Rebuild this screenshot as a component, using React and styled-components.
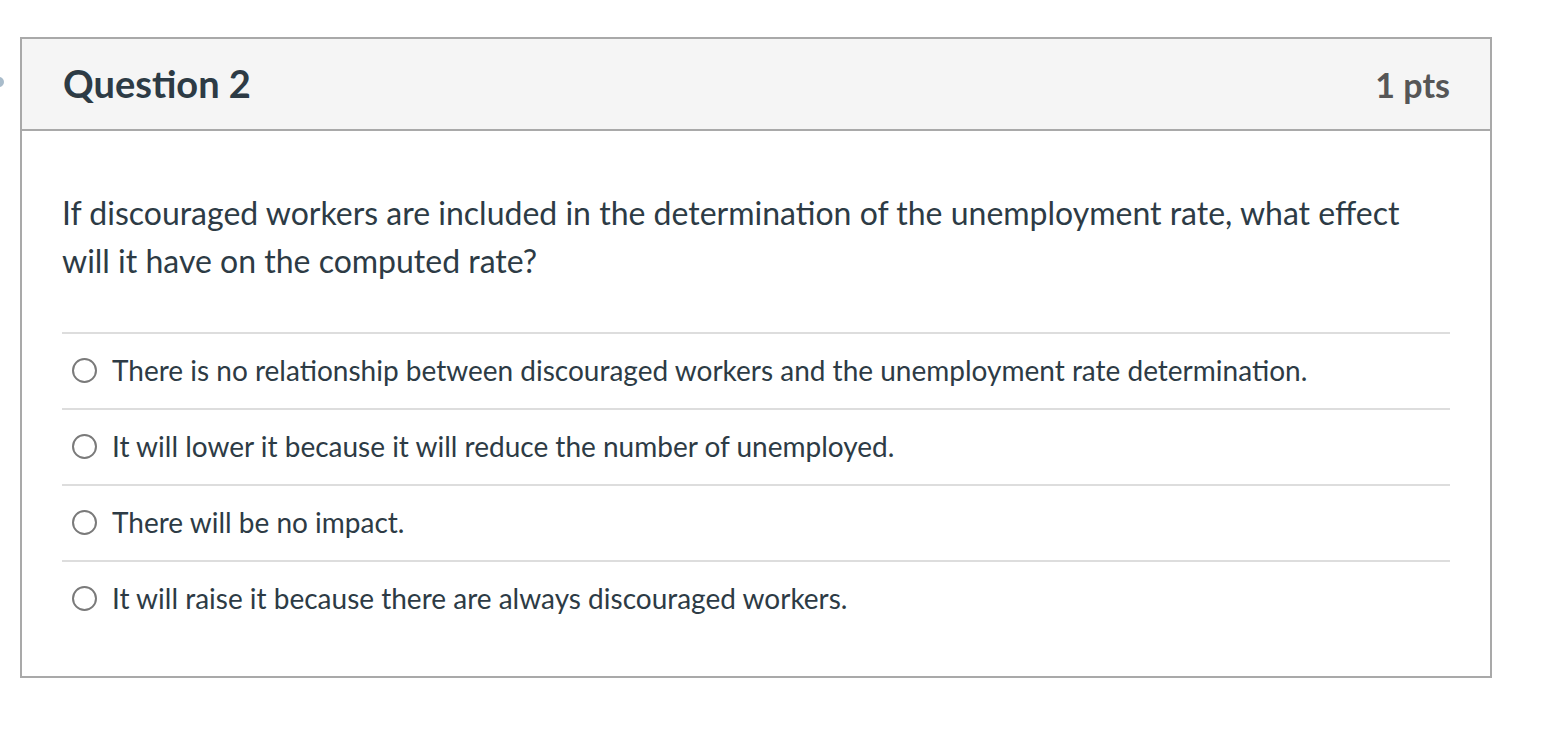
import styled, { createGlobalStyle } from "styled-components";

const GlobalStyle = createGlobalStyle`
  html, body {
    margin: 0;
    padding: 0;
    background: #ffffff;
  }
  body {
    font-family: Lato, "Noto Sans", "Liberation Sans", sans-serif;
    color: #2d3b45;
  }
`;

const answers = [
  "There is no relationship between discouraged workers and the unemployment rate determination.",
  "It will lower it because it will reduce the number of unemployed.",
  "There will be no impact.",
  "It will raise it because there are always discouraged workers.",
];

const App = () => {
  return (
    <>
      <GlobalStyle />
      <Page>
        <EdgeDot />
        <QuestionCard>
          <CardHeader>
            <QuestionTitle>Question 2</QuestionTitle>
            <Points>1 pts</Points>
          </CardHeader>
          <CardBody>
            <QuestionText>
              If discouraged workers are included in the determination of the
              unemployment rate, what effect will it have on the computed rate?
            </QuestionText>
            <AnswerList>
              {answers.map((answer) => (
                <AnswerRow key={answer}>
                  <RadioInput type="radio" name="question-2" />
                  <AnswerLabel>{answer}</AnswerLabel>
                </AnswerRow>
              ))}
            </AnswerList>
          </CardBody>
        </QuestionCard>
      </Page>
    </>
  );
};

export default App;

const Page = styled.div`
  position: relative;
  width: 1566px;
  height: 740px;
  padding: 37px 0 0 20px;
  box-sizing: border-box;
`;

const EdgeDot = styled.div`
  position: absolute;
  left: -6px;
  top: 77px;
  width: 10px;
  height: 10px;
  border-radius: 50%;
  background: #a9bccb;
`;

const QuestionCard = styled.div`
  box-sizing: border-box;
  width: 1472px;
  height: 641px;
  border: 2px solid #a9a9a9;
  background: #ffffff;
`;

const CardHeader = styled.div`
  box-sizing: border-box;
  height: 92px;
  padding: 0 40px 2px 41px;
  display: flex;
  align-items: center;
  justify-content: space-between;
  background: #f5f5f5;
  border-bottom: 2px solid #a9a9a9;
`;

const QuestionTitle = styled.h2`
  margin: 0;
  font-size: 38px;
  font-weight: 700;
  color: #2d3b45;
`;

const Points = styled.span`
  font-size: 34px;
  font-weight: 700;
  color: #565656;
  margin-top: 3px;
`;

const CardBody = styled.div`
  padding: 58px 40px 0 40px;
`;

const QuestionText = styled.p`
  margin: 0 0 47px 0;
  font-size: 32px;
  line-height: 48px;
  color: #2d3b45;
`;

const AnswerList = styled.div`
  display: flex;
  flex-direction: column;
`;

const AnswerRow = styled.label`
  box-sizing: border-box;
  height: 76px;
  display: flex;
  align-items: center;
  gap: 15px;
  padding: 0 0 2px 10px;
  border-top: 2px solid #dddddd;
`;

const RadioInput = styled.input`
  appearance: none;
  margin: 0;
  width: 25px;
  height: 25px;
  border-radius: 50%;
  border: 2px solid #7a7a7a;
  background: #ffffff;
  flex-shrink: 0;
`;

const AnswerLabel = styled.span`
  font-size: 28px;
  color: #2d3b45;
`;
